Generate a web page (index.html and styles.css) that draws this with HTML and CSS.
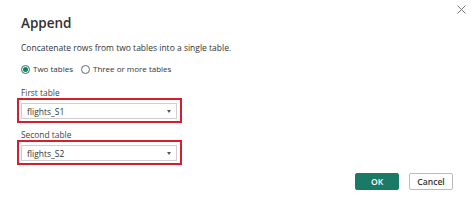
FILE: index.html
```html
<!DOCTYPE html>
<html lang="en">
<head>
    <meta charset="UTF-8">
    <title>Append</title>
    <link rel="stylesheet" href="styles.css">
</head>
<body>
    <div class="dialog">
        <div class="head">
            <h1 class="title">Append</h1>
            <button class="close" aria-label="Close">
                <svg width="9" height="9" viewBox="0 0 9 9"><path d="M0.5 0.5L8.5 8.5M8.5 0.5L0.5 8.5" stroke="#777" stroke-width="1" fill="none"/></svg>
            </button>
        </div>
        <p class="desc">Concatenate rows from two tables into a single table.</p>
        <div class="radios">
            <label class="radio checked"><span class="dot"></span>Two tables</label>
            <label class="radio"><span class="dot"></span>Three or more tables</label>
        </div>
        <div class="field">
            <div class="label">First table</div>
            <div class="mark">
                <div class="select"><span>flights_S1</span><span class="caret"></span></div>
            </div>
        </div>
        <div class="field">
            <div class="label">Second table</div>
            <div class="mark">
                <div class="select"><span>flights_S2</span><span class="caret"></span></div>
            </div>
        </div>
        <div class="footer">
            <button class="btn primary">OK</button>
            <button class="btn">Cancel</button>
        </div>
    </div>
</body>
</html>
```

FILE: styles.css
```css
*{
    box-sizing: border-box;
}
body{
    margin: 0;
    background: #fff;
    font-family: "Open Sans", "Noto Sans", sans-serif;
    color: #323130;
}
.dialog{
    width: 474px;
    height: 210px;
    padding: 0 8px 0 21px;
    display: flex;
    flex-direction: column;
}
.head{
    display: flex;
    justify-content: space-between;
    align-items: flex-start;
    height: 36px;
}
.title{
    margin: 14px 0 0;
    font-size: 13.5px;
    font-weight: 600;
    line-height: 18px;
}
.close{
    border: 0;
    background: none;
    padding: 0;
    margin-top: 5px;
    width: 9px;
    height: 9px;
    display: flex;
}
.desc{
    margin: 6px 0 0;
    font-size: 8.5px;
    line-height: 12px;
    color: #333;
}
.radios{
    display: flex;
    gap: 8px;
    margin-top: 9px;
    font-size: 8px;
    line-height: 12px;
    color: #333;
}
.radio{
    display: flex;
    align-items: center;
    gap: 3px;
}
.dot{
    width: 9px;
    height: 9px;
    border: 1px solid #666;
    border-radius: 50%;
    display: flex;
    align-items: center;
    justify-content: center;
}
.radio.checked .dot{
    border-color: #1b7a66;
}
.radio.checked .dot::after{
    content: "";
    width: 5px;
    height: 5px;
    border-radius: 50%;
    background: #1b7a66;
}
.field{
    margin-top: 12px;
    width: 165px;
    margin-left: -4px;
}
.field + .field{
    margin-top: 6px;
}
.label{
    font-size: 8.4px;
    line-height: 11px;
    color: #444;
    padding-left: 4px;
}
.mark{
    border: 2px solid #d2202e;
    padding: 3px 3px 2px 2px;
}
.select{
    height: 16px;
    border: 1px solid #cfcfcf;
    display: flex;
    align-items: center;
    justify-content: space-between;
    padding: 0 5px;
    font-size: 8.5px;
    color: #333;
}
.caret{
    width: 0;
    height: 0;
    border-left: 2.5px solid transparent;
    border-right: 2.5px solid transparent;
    border-top: 3px solid #555;
}
.footer{
    margin-top: auto;
    margin-bottom: 20px;
    margin-right: 13px;
    display: flex;
    justify-content: flex-end;
    gap: 10px;
}
.btn{
    width: 44px;
    height: 17px;
    padding: 0;
    border: 1px solid #bbb;
    border-radius: 2px;
    background: #fff;
    font-family: inherit;
    font-size: 8.6px;
    font-weight: 600;
    color: #333;
}
.btn.primary{
    background: #1b7a66;
    border-color: #1b7a66;
    color: #fff;
}
```
